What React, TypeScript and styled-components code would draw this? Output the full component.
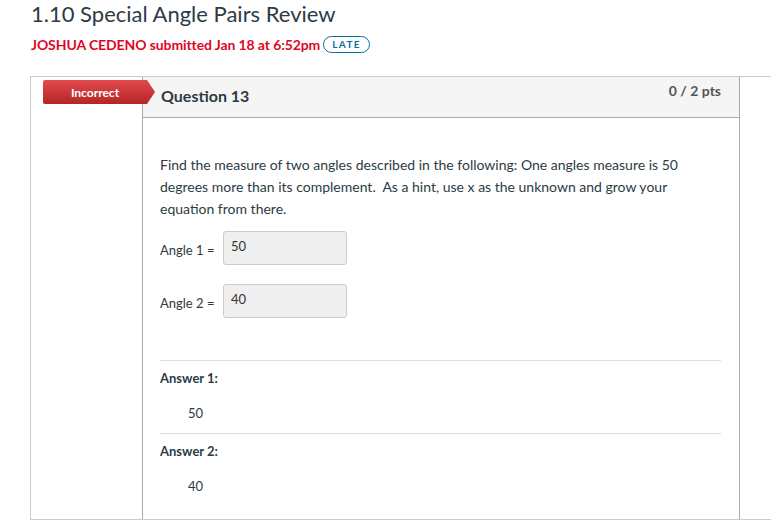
import styled, { createGlobalStyle } from "styled-components";

/* ─── DATA ────────────────────────────────────────────────────────── */

const angles = [
  { label: "Angle 1 =", value: "50" },
  { label: "Angle 2 =", value: "40" },
];

const answers = [
  { label: "Answer 1:", value: "50" },
  { label: "Answer 2:", value: "40" },
];

/* ─── COMPONENT ───────────────────────────────────────────────────── */

export default function App() {
  return (
    <>
      <GlobalStyle />
      <Page>
        <Title>1.10 Special Angle Pairs Review</Title>
        <SubmittedRow>
          <Submitted>JOSHUA CEDENO submitted Jan 18 at 6:52pm</Submitted>
          <LateBadge>LATE</LateBadge>
        </SubmittedRow>

        <QuestionHolder>
          <SideColumn>
            <ResultFlag>Incorrect</ResultFlag>
          </SideColumn>

          <QuestionBox>
            <QuestionHeader>
              <QuestionName>Question 13</QuestionName>
              <Points>0 / 2 pts</Points>
            </QuestionHeader>

            <QuestionBody>
              <QuestionText>
                Find the measure of two angles described in the following: One
                angles measure is 50 degrees more than its complement.&nbsp; As a
                hint, use x as the unknown and grow your equation from there.
              </QuestionText>

              <AngleList>
                {angles.map((a) => (
                  <AngleRow key={a.label}>
                    <AngleLabel>{a.label}</AngleLabel>
                    <AngleInput>{a.value}</AngleInput>
                  </AngleRow>
                ))}
              </AngleList>

              <Answers>
                {answers.map((a) => (
                  <AnswerBlock key={a.label}>
                    <AnswerLabel>{a.label}</AnswerLabel>
                    <AnswerValue>{a.value}</AnswerValue>
                  </AnswerBlock>
                ))}
              </Answers>
            </QuestionBody>
          </QuestionBox>
        </QuestionHolder>
      </Page>
    </>
  );
}

/* ─── STYLED COMPONENTS ───────────────────────────────────────────── */

const GlobalStyle = createGlobalStyle`
  html, body {
    margin: 0;
    padding: 0;
    background: #ffffff;
    overflow: hidden;
  }
  body {
    font-family: Lato, "Open Sans", "Liberation Sans", sans-serif;
    color: #2d3b45;
  }
`;

const Page = styled.div`
  width: 820px;
  padding-left: 30px;
`;

const Title = styled.h1`
  margin: 0 0 0 1px;
  font-size: 22px;
  font-weight: 400;
  line-height: 28px;
  color: #2d3b45;
`;

const SubmittedRow = styled.div`
  display: flex;
  align-items: center;
  gap: 3px;
  margin: 7px 0 0 1px;
  height: 18px;
`;

const Submitted = styled.span`
  font-size: 14px;
  font-weight: 700;
  color: #e0061f;
  letter-spacing: -0.1px;
`;

const LateBadge = styled.span`
  display: inline-flex;
  align-items: center;
  height: 15px;
  padding: 0 8px;
  border: 1px solid #0770a3;
  border-radius: 10px;
  font-size: 10px;
  font-weight: 700;
  letter-spacing: 1.4px;
  color: #0770a3;
`;

const QuestionHolder = styled.div`
  display: flex;
  margin-top: 23px;
  height: 442px;
  border: 1px solid #c7cdd1;
  border-right: none;
`;

const SideColumn = styled.div`
  position: relative;
  width: 111px;
  flex-shrink: 0;
`;

const ResultFlag = styled.div`
  position: absolute;
  top: 3px;
  left: 12px;
  width: 104px;
  height: 24px;
  padding-right: 8px;
  display: flex;
  align-items: center;
  justify-content: center;
  font-size: 12px;
  font-weight: 700;
  color: #ffffff;
  background: linear-gradient(#e34a4f, #b42526);
  border-radius: 2px 0 0 2px;
  clip-path: polygon(0 0, 104px 0, 112px 50%, 104px 100%, 0 100%);
  box-sizing: content-box;
  z-index: 1;
`;

const QuestionBox = styled.div`
  width: 596px;
  flex-shrink: 0;
  display: flex;
  flex-direction: column;
  border-left: 1px solid #aaaaaa;
  border-right: 1px solid #aaaaaa;
`;

const QuestionHeader = styled.div`
  display: flex;
  justify-content: space-between;
  height: 40px;
  padding: 0 18px 0 18px;
  background: #f5f5f5;
  border-bottom: 1px solid #aaaaaa;
`;

const QuestionName = styled.div`
  align-self: center;
  padding-bottom: 3px;
  font-size: 16px;
  font-weight: 700;
  color: #2d3b45;
`;

const Points = styled.div`
  padding-top: 5px;
  font-size: 14px;
  font-weight: 700;
  color: #555555;
`;

const QuestionBody = styled.div`
  padding: 36px 18px 0 17px;
`;

const QuestionText = styled.p`
  margin: 0;
  font-size: 14px;
  line-height: 22px;
  color: #2d3b45;
`;

const AngleList = styled.div`
  display: flex;
  flex-direction: column;
  gap: 19px;
  margin-top: 11px;
`;

const AngleRow = styled.div`
  display: flex;
  align-items: center;
`;

const AngleLabel = styled.span`
  width: 63px;
  padding-top: 4px;
  font-size: 13px;
  color: #2d3b45;
`;

const AngleInput = styled.div`
  box-sizing: border-box;
  width: 124px;
  height: 34px;
  padding: 6px 7px;
  font-size: 13px;
  line-height: 16px;
  color: #333333;
  background: #efefef;
  border: 1px solid #c7cdd1;
  border-radius: 3px;
`;

const Answers = styled.div`
  margin-top: 42px;
`;

const AnswerBlock = styled.div`
  padding: 8px 0 11px;
  border-top: 1px solid #dddddd;
`;

const AnswerLabel = styled.div`
  font-size: 13px;
  font-weight: 700;
  line-height: 18px;
  color: #2d3b45;
`;

const AnswerValue = styled.div`
  margin-top: 17px;
  padding-left: 28px;
  font-size: 13px;
  line-height: 18px;
  color: #2d3b45;
`;
